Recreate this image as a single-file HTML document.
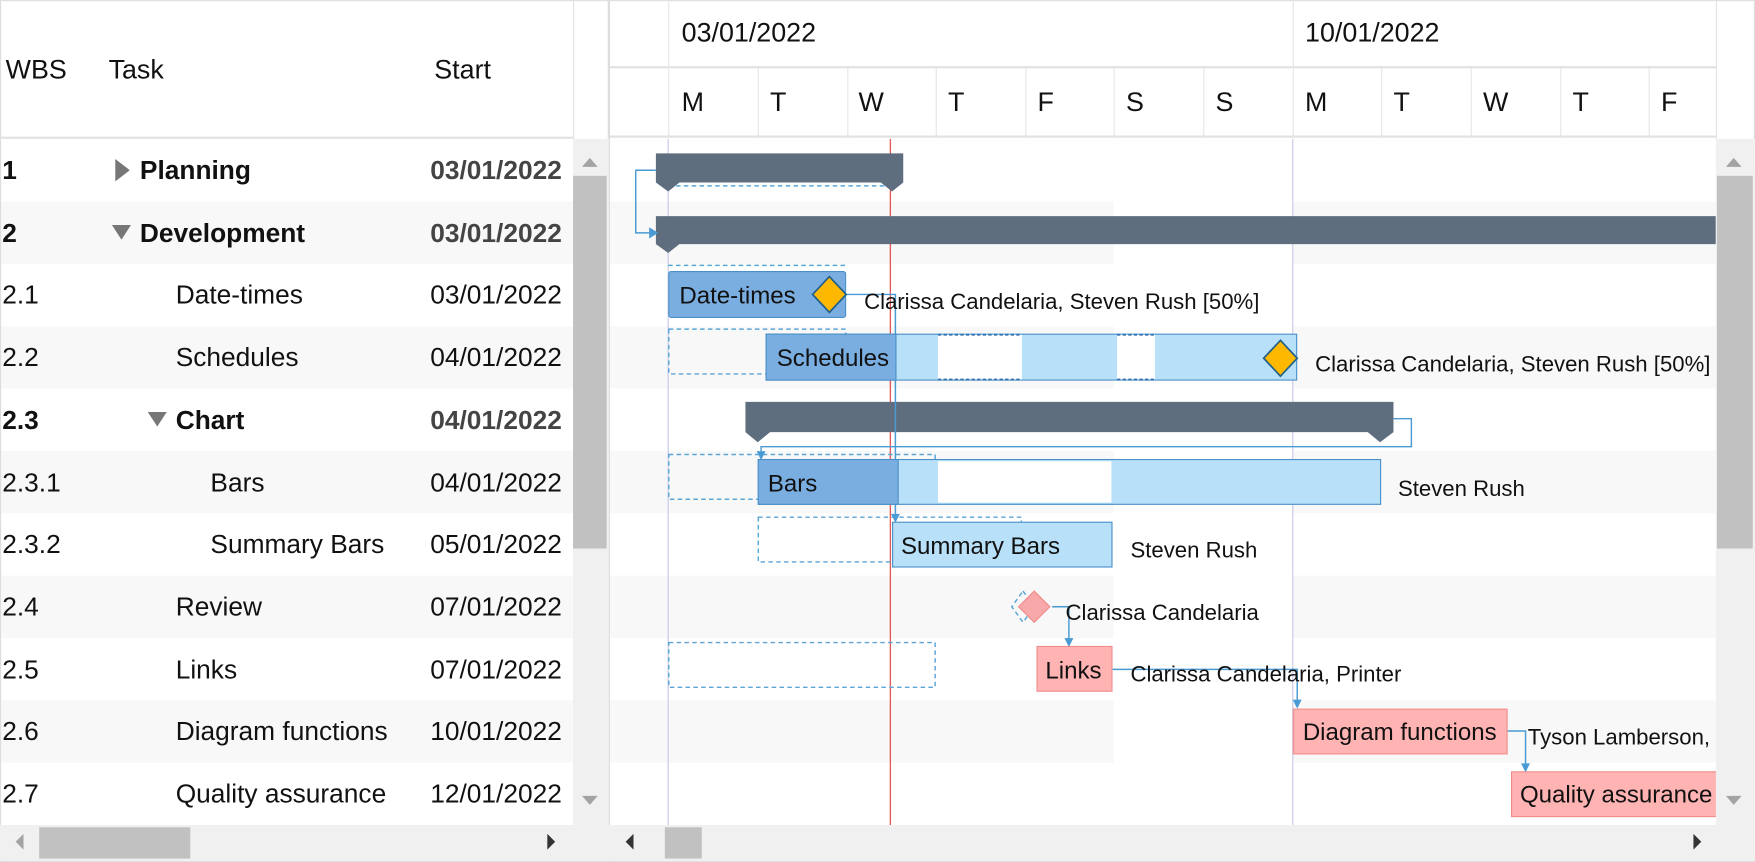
<!DOCTYPE html>
<html><head><meta charset="utf-8"><style>
html,body{margin:0;padding:0;background:#fff;overflow:hidden}
svg{display:block;font-family:"Liberation Sans",Arial,sans-serif}
</style></head><body>
<svg width="1755" height="862" viewBox="0 0 1568 770" xmlns="http://www.w3.org/2000/svg">
<rect width="1568" height="770" fill="#fff"/>
<g fill="#f8f8f8">
<rect x="0" y="180" width="512" height="55.7"/><rect x="0" y="291.4" width="512" height="55.7"/><rect x="0" y="402.8" width="512" height="55.7"/><rect x="0" y="514.2" width="512" height="55.7"/><rect x="0" y="625.6" width="512" height="55.7"/>
<rect x="545" y="180" width="450" height="55.7"/><rect x="545" y="291.4" width="450" height="55.7"/><rect x="545" y="402.8" width="450" height="55.7"/><rect x="545" y="514.2" width="450" height="55.7"/><rect x="545" y="625.6" width="450" height="55.7"/>
<rect x="1155" y="180" width="378" height="55.7"/><rect x="1155" y="291.4" width="378" height="55.7"/><rect x="1155" y="402.8" width="378" height="55.7"/><rect x="1155" y="514.2" width="378" height="55.7"/><rect x="1155" y="625.6" width="378" height="55.7"/>
</g>
<rect x="0.5" y="0.5" width="1567" height="769" fill="none" stroke="#ddd"/>
<rect x="0" y="122" width="512" height="2" fill="#e2e2e2"/>
<rect x="545" y="121" width="988" height="2" fill="#e2e2e2"/>
<line x1="545" y1="60" x2="1533" y2="60" stroke="#e2e2e2" stroke-width="2"/>
<line x1="512.5" y1="0" x2="512.5" y2="124" stroke="#e2e2e2"/>
<line x1="544" y1="0" x2="544" y2="770" stroke="#ddd" stroke-width="2"/>
<line x1="1533.5" y1="0" x2="1533.5" y2="124" stroke="#e2e2e2"/>
<g stroke="#e6e6e6">
<line x1="597.5" y1="0" x2="597.5" y2="122"/><line x1="1155.5" y1="0" x2="1155.5" y2="122"/>
<line x1="677.5" y1="60" x2="677.5" y2="122"/><line x1="757.5" y1="60" x2="757.5" y2="122"/><line x1="836.5" y1="60" x2="836.5" y2="122"/><line x1="916.5" y1="60" x2="916.5" y2="122"/><line x1="995.5" y1="60" x2="995.5" y2="122"/><line x1="1075.5" y1="60" x2="1075.5" y2="122"/><line x1="1234.5" y1="60" x2="1234.5" y2="122"/><line x1="1314.5" y1="60" x2="1314.5" y2="122"/><line x1="1394.5" y1="60" x2="1394.5" y2="122"/><line x1="1473.5" y1="60" x2="1473.5" y2="122"/>
</g>
<g font-size="24" fill="#111">
<text x="5" y="70">WBS</text><text x="97" y="70">Task</text><text x="388" y="70">Start</text>
<text x="609" y="37">03/01/2022</text><text x="1166" y="37">10/01/2022</text>
<text x="609" y="99">M</text><text x="688" y="99">T</text><text x="767" y="99">W</text><text x="847" y="99">T</text><text x="927" y="99">F</text><text x="1006" y="99">S</text><text x="1086" y="99">S</text><text x="1166" y="99">M</text><text x="1245" y="99">T</text><text x="1325" y="99">W</text><text x="1405" y="99">T</text><text x="1484" y="99">F</text>
</g>
<g font-size="23.5" fill="#111">
<g font-weight="bold"><text x="2" y="160">1</text><text x="2" y="216">2</text><text x="2" y="383">2.3</text>
<text x="125" y="160">Planning</text><text x="125" y="216">Development</text><text x="157" y="383">Chart</text></g>
<text x="2" y="271">2.1</text><text x="2" y="327">2.2</text><text x="2" y="439">2.3.1</text><text x="2" y="494">2.3.2</text><text x="2" y="550">2.4</text><text x="2" y="606">2.5</text><text x="2" y="661">2.6</text><text x="2" y="717">2.7</text>
<text x="157" y="271">Date-times</text><text x="157" y="327">Schedules</text><text x="188" y="439">Bars</text><text x="188" y="494">Summary Bars</text><text x="157" y="550">Review</text><text x="157" y="606">Links</text><text x="157" y="661">Diagram functions</text><text x="157" y="717">Quality assurance</text>
<g text-anchor="end"><g font-weight="bold" fill="#444"><text x="502" y="160">03/01/2022</text><text x="502" y="216">03/01/2022</text><text x="502" y="383">04/01/2022</text></g>
<text x="502" y="271">03/01/2022</text><text x="502" y="327">04/01/2022</text><text x="502" y="439">04/01/2022</text><text x="502" y="494">05/01/2022</text><text x="502" y="550">07/01/2022</text><text x="502" y="606">07/01/2022</text><text x="502" y="661">10/01/2022</text><text x="502" y="717">12/01/2022</text></g>
</g>
<g fill="#777"><path d="M103 142 L116 152 L103 162Z"/><path d="M100 201 L117 201 L108.5 214Z"/><path d="M132 368 L149 368 L140.5 381Z"/></g>
<rect x="512" y="124" width="32" height="613" fill="#f0f0f0"/>
<rect x="512" y="157" width="30" height="333" fill="#c1c1c1"/>
<rect x="0" y="737" width="1568" height="32" fill="#f0f0f0"/>
<rect x="35" y="739" width="135" height="28" fill="#c1c1c1"/>
<rect x="594" y="739" width="33" height="28" fill="#c1c1c1"/>
<g fill="#a3a3a3"><path d="M520 149 L534 149 L527 141Z"/><path d="M520 711 L534 711 L527 719Z"/><path d="M21 745 L21 759 L14 752Z"/></g>
<g fill="#333"><path d="M489 745 L489 759 L496 752Z"/><path d="M566 745 L566 759 L559 752Z"/><path d="M1513 745 L1513 759 L1520 752Z"/></g>
<line x1="597" y1="124" x2="597" y2="737" stroke="#cfd0ea" stroke-width="1.2"/>
<line x1="1155" y1="124" x2="1155" y2="737" stroke="#cfd0ea" stroke-width="1.2"/>
<line x1="795.5" y1="124" x2="795.5" y2="737" stroke="#e05a5a" stroke-width="1.2"/>
<g fill="none" stroke="#5aa5d8" stroke-width="1.3" stroke-dasharray="4,3">
<line x1="597" y1="166" x2="795" y2="166"/>
<line x1="597" y1="237" x2="756" y2="237"/>
<rect x="597.5" y="294" width="158" height="40"/>
<rect x="597.5" y="406" width="238" height="40"/>
<rect x="677.5" y="462" width="235" height="40"/>
<rect x="597.5" y="574" width="238" height="40"/>
<path d="M914 528 L924 542 L914 556 L904 542Z"/>
</g>
<g fill="#5f6e7f">
<path d="M586 137 L807 137 L807 163 L797 171 L787 163 L607 163 L597 171 L586 163Z"/>
<path d="M586 193 L1533 193 L1533 218 L607 218 L597 226 L586 218Z"/>
<path d="M666 359 L1245 359 L1245 386 L1233 395 L1222 386 L688 386 L677 395 L666 386Z"/>
</g>
<g fill="none" stroke="#4a9ad4" stroke-width="1.3">
<path d="M586 152 H568 V208 H582"/>
<path d="M756 263 H800 V462"/>
<path d="M1245 374 H1261 V399 H680 V406"/>
<path d="M940 542 H955 V573"/>
<path d="M994 598 H1159 V628"/>
<path d="M1347 653 H1363 V685"/>
</g>
<g fill="#4a9ad4"><path d="M580 203 L588 208 L580 213Z"/><path d="M796 459 L804 459 L800 467Z"/><path d="M676 403 L684 403 L680 411Z"/><path d="M951 570 L959 570 L955 578Z"/><path d="M1155 625 L1163 625 L1159 633Z"/><path d="M1359 682 L1367 682 L1363 690Z"/></g>
<rect x="597.5" y="242.5" width="158" height="41" rx="2" fill="#7aaee0" stroke="#4a90c8"/>
<rect x="684.5" y="298.5" width="474" height="41" fill="#b8e0f8" stroke="#4a90c8"/>
<rect x="684.5" y="298.5" width="116" height="41" fill="#7aaee0" stroke="#4a90c8"/>
<rect x="838" y="299" width="75" height="40" fill="#fff"/><rect x="998" y="299" width="34" height="40" fill="#fff"/>
<g stroke="#2d6fb0" stroke-dasharray="3,2" stroke-width="1.5"><line x1="838" y1="299" x2="913" y2="299"/><line x1="838" y1="339" x2="913" y2="339"/><line x1="998" y1="299" x2="1032" y2="299"/><line x1="998" y1="339" x2="1032" y2="339"/><line x1="838" y1="411" x2="993" y2="411"/><line x1="838" y1="450" x2="993" y2="450"/></g>
<rect x="677.5" y="410.5" width="556" height="40" fill="#b8e0f8" stroke="#4a90c8"/>
<rect x="677.5" y="410.5" width="125" height="40" fill="#7aaee0" stroke="#4a90c8"/>
<rect x="838" y="412" width="155" height="37" fill="#fff"/>
<rect x="797.5" y="466.5" width="196" height="40" fill="#b8e0f8" stroke="#4a90c8"/>
<g fill="#ffb3b3" stroke="#f08c8c"><rect x="926.5" y="577.5" width="67" height="40"/><rect x="1155.5" y="633.5" width="191" height="40"/><rect x="1350.5" y="689.5" width="183" height="40"/></g>
<path d="M924 528 L938 542 L924 556 L910 542Z" fill="#f8a8a8" stroke="#f08c8c"/>
<g fill="#ffb800" stroke="#1f5f8a" stroke-width="1.5"><path d="M741 247 L756 263 L741 279 L726 263Z"/><path d="M1144 304 L1159 320 L1144 336 L1129 320Z"/></g>
<g font-size="21.5" fill="#111">
<text x="607" y="271">Date-times</text><text x="694" y="327">Schedules</text><text x="686" y="439">Bars</text><text x="805" y="495">Summary Bars</text><text x="934" y="606">Links</text><text x="1164" y="661">Diagram functions</text><text x="1358" y="717">Quality assurance</text>
</g>
<g font-size="19.8" fill="#111">
<text x="772" y="276">Clarissa Candelaria, Steven Rush [50%]</text>
<text x="1175" y="332">Clarissa Candelaria, Steven Rush [50%]</text>
<text x="1249" y="443">Steven Rush</text>
<text x="1010" y="498">Steven Rush</text>
<text x="952" y="554">Clarissa Candelaria</text>
<text x="1010" y="609">Clarissa Candelaria, Printer</text>
<text x="1365" y="665">Tyson Lamberson,</text>
</g>
<rect x="1533" y="124" width="35" height="613" fill="#f0f0f0"/>
<rect x="1534" y="157" width="32" height="333" fill="#c1c1c1"/>
<g fill="#a3a3a3"><path d="M1542 149 L1556 149 L1549 141Z"/><path d="M1542 711 L1556 711 L1549 719Z"/></g>
</svg>
</body></html>
